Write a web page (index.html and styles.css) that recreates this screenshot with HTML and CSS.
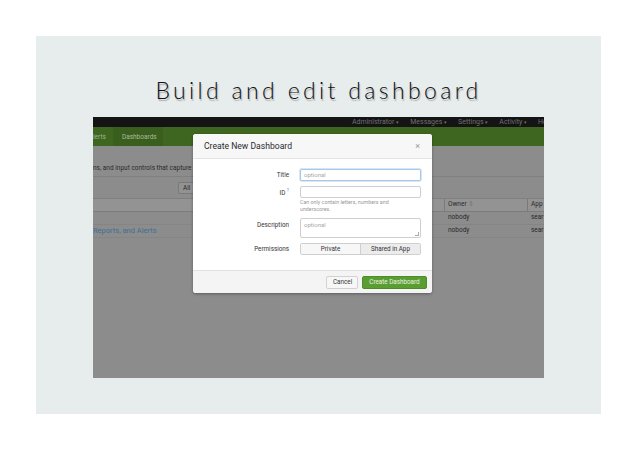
FILE: index.html
```html
<!DOCTYPE html>
<html>
<head>
<meta charset="utf-8">
<link rel="stylesheet" href="styles.css">
</head>
<body>
<div class="slide">
  <h1 class="slide-title">Build and edit dashboard</h1>
  <div class="shot">
    <div class="topbar">
      <span class="menu">Administrator <span class="caret">▾</span></span>
      <span class="menu">Messages <span class="caret">▾</span></span>
      <span class="menu">Settings <span class="caret">▾</span></span>
      <span class="menu">Activity <span class="caret">▾</span></span>
      <span class="menu">Help</span>
    </div>
    <div class="appbar">
      <span class="tab">lerts</span>
      <span class="tab active">Dashboards</span>
    </div>
    <div class="content">
      <div class="intro">ns, and input controls that capture information</div>
      <div class="filters"><span class="btn-all">All</span></div>
      <div class="table">
        <div class="trow thead">
          <span class="c-title"></span>
          <span class="c-owner">Owner <span class="sort">⇕</span></span>
          <span class="c-app">App</span>
        </div>
        <div class="trow">
          <span class="c-title"></span>
          <span class="c-owner">nobody</span>
          <span class="c-app">sear</span>
        </div>
        <div class="trow">
          <span class="c-title link">Reports, and Alerts</span>
          <span class="c-owner">nobody</span>
          <span class="c-app">sear</span>
        </div>
      </div>
    </div>

    <div class="modal">
      <div class="modal-head">
        <span class="modal-title">Create New Dashboard</span>
        <span class="close">×</span>
      </div>
      <div class="modal-body">
        <span class="lbl">Title</span>
        <div class="field"><div class="input focus">optional</div></div>
        <span class="lbl">ID <sup class="q">?</sup></span>
        <div class="field"><div class="input"></div></div>
        <span></span>
        <div class="help">Can only contain letters, numbers and<br>underscores.</div>
        <span class="lbl lbl-top">Description</span>
        <div class="field"><div class="input textarea">optional<span class="grip"></span></div></div>
        <span class="lbl">Permissions</span>
        <div class="field"><div class="seg"><span class="seg-btn on">Private</span><span class="seg-btn">Shared in App</span></div></div>
      </div>
      <div class="modal-foot">
        <span class="btn">Cancel</span>
        <span class="btn primary">Create Dashboard</span>
      </div>
    </div>
  </div>
</div>
</body>
</html>
```
FILE: styles.css
```css
html, body {
  margin: 0;
  padding: 0;
  background: #ffffff;
}
body {
  width: 638px;
  height: 451px;
  overflow: hidden;
  font-family: Roboto, "Liberation Sans", Arial, sans-serif;
}
.slide {
  margin: 36px 0 0 36px;
  width: 565px;
  height: 378px;
  background: #e7ecec;
  display: flex;
  flex-direction: column;
  align-items: center;
  overflow: hidden;
}
.slide-title {
  margin: 41px 0 14px 0;
  height: 26px;
  line-height: 26px;
  font-family: Lato, "DejaVu Sans", sans-serif;
  font-weight: 300;
  font-size: 23px;
  letter-spacing: 3.35px;
  color: #111111;
  text-shadow: 1px 2px 1px rgba(70, 70, 70, 0.35);
  white-space: nowrap;
}
.shot {
  position: relative;
  width: 451px;
  height: 261px;
  background: #8c8c8c;
  overflow: hidden;
  display: flex;
  flex-direction: column;
  font-size: 6.5px;
}
.topbar {
  height: 10px;
  background: #141414;
  display: flex;
  align-items: center;
  padding-left: 259px;
  gap: 11px;
  white-space: nowrap;
  color: #6f6f6f;
  font-size: 7px;
  flex-shrink: 0;
}
.caret { font-size: 5px; }
.appbar {
  height: 19px;
  background: #3f6621;
  display: flex;
  align-items: stretch;
  flex-shrink: 0;
  color: #9fb38f;
}
.tab {
  display: flex;
  align-items: center;
}
.tab.active {
  background: #3a5e1e;
  padding: 0 6px 0 9px;
  margin-left: 7px;
  color: #a9bb9a;
}
.content {
  flex: 1;
  display: flex;
  flex-direction: column;
  color: #2a2a2a;
}
.intro {
  height: 16px;
  margin-top: 14px;
  line-height: 16px;
  border-bottom: 1px solid #808080;
  white-space: nowrap;
}
.filters {
  height: 21px;
  display: flex;
  align-items: center;
  padding-left: 85px;
}
.btn-all {
  width: 17px;
  height: 12px;
  box-sizing: border-box;
  border: 1px solid #797979;
  background: #929292;
  border-radius: 1px;
  padding-left: 4px;
  line-height: 10px;
}
.table {
  border-top: 1px solid #7f7f7f;
}
.trow {
  height: 12px;
  display: grid;
  grid-template-columns: 351px 83px 17px;
  border-bottom: 1px solid #858585;
  line-height: 11px;
}
.trow > span { padding-left: 4px; white-space: nowrap; overflow: hidden; }
.thead {
  background: #939393;
  border-bottom: 1px solid #7c7c7c;
}
.thead .c-owner, .thead .c-app { border-left: 1px solid #7a7a7a; padding-left: 3px; }
.sort { color: #777; }
.trow .c-title.link { color: #3d6f98; font-size: 7.5px; padding-left: 0; }

/* modal */
.modal {
  position: absolute;
  left: 100px;
  top: 17px;
  width: 239px;
  height: 159px;
  background: #ffffff;
  border-radius: 3px;
  box-shadow: 0 1px 3px rgba(0,0,0,0.35);
  display: flex;
  flex-direction: column;
  overflow: hidden;
  color: #333;
}
.modal-head {
  height: 24px;
  border-bottom: 1px solid #e4e4e4;
  background: #f7f7f7;
  display: flex;
  align-items: center;
  justify-content: space-between;
  padding: 0 12px 0 11px;
}
.modal-title { font-size: 8.6px; color: #2a2a2a; }
.close { font-size: 9px; color: #999; }
.modal-body {
  flex: 1;
  display: grid;
  grid-template-columns: 96px 121px;
  column-gap: 11px;
  row-gap: 5px;
  align-content: start;
  padding-top: 10px;
  font-size: 6.3px;
}
.lbl {
  text-align: right;
  align-self: center;
  color: #333;
}
.lbl-top { align-self: start; padding-top: 3px; }
.q { font-size: 4.5px; color: #5a8ec0; vertical-align: 3px; }
.input {
  height: 12px;
  box-sizing: border-box;
  border: 1px solid #cfcfcf;
  border-radius: 2px;
  background: #fff;
  color: #a8a8a8;
  padding-left: 3px;
  line-height: 10px;
  font-size: 6px;
}
.input.focus {
  border-color: #a9c8e6;
  box-shadow: 0 0 0 1px #d6e6f5;
}
.textarea {
  position: relative;
  height: 20px;
  line-height: 11px;
}
.grip {
  position: absolute;
  right: 1px;
  bottom: 1px;
  width: 3px;
  height: 3px;
  border-right: 1px solid #aaa;
  border-bottom: 1px solid #aaa;
}
.help {
  margin-top: -4px;
  font-size: 5.3px;
  line-height: 7px;
  color: #999;
}
.seg {
  height: 12px;
  display: flex;
  border: 1px solid #cfcfcf;
  border-radius: 2px;
  box-sizing: border-box;
  overflow: hidden;
}
.seg-btn {
  flex: 1;
  text-align: center;
  line-height: 10px;
  background: #ececec;
  color: #333;
}
.seg-btn.on {
  background: #f7f7f7;
  border-right: 1px solid #cfcfcf;
}
.modal-foot {
  height: 22px;
  border-top: 1px solid #e1e1e1;
  background: #f4f4f4;
  display: flex;
  align-items: center;
  justify-content: flex-end;
  gap: 4px;
  padding-right: 5px;
}
.btn {
  height: 13px;
  box-sizing: border-box;
  border: 1px solid #d2d2d2;
  border-radius: 2px;
  background: #f7f7f7;
  color: #333;
  font-size: 6.3px;
  line-height: 11px;
  padding: 0 6px;
  width: 32px;
  text-align: center;
}
.btn.primary {
  width: 65px;
  background: #5a9e32;
  border-color: #4e8c2b;
  color: #eaf3e3;
  padding: 0;
}
```
